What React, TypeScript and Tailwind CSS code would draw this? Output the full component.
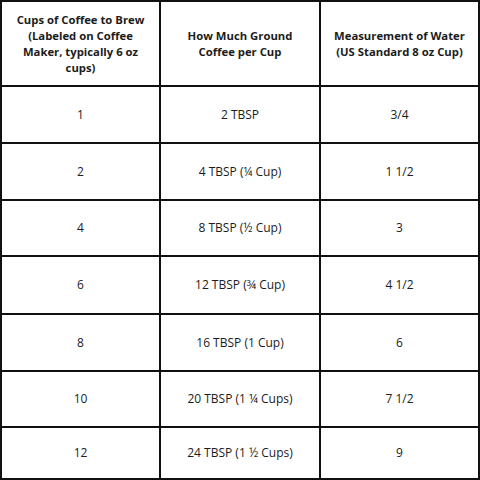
const header = [
  ['Cups of Coffee to Brew', '(Labeled on Coffee', 'Maker, typically 6 oz', 'cups)'],
  ['How Much Ground', 'Coffee per Cup'],
  ['Measurement of Water', '(US Standard 8 oz Cup)'],
];

const rows = [
  ['1', '2 TBSP', '3/4'],
  ['2', '4 TBSP (¼ Cup)', '1 1/2'],
  ['4', '8 TBSP (½ Cup)', '3'],
  ['6', '12 TBSP (¾ Cup)', '4 1/2'],
  ['8', '16 TBSP (1 Cup)', '6'],
  ['10', '20 TBSP (1 ¼ Cups)', '7 1/2'],
  ['12', '24 TBSP (1 ½ Cups)', '9'],
];

const rowHeights = ['h-[57px]', 'h-[57px]', 'h-[56px]', 'h-[58px]', 'h-[57px]', 'h-[56px]', 'h-[50px]'];

export default function App() {
  return (
    <div className="w-[480px] h-[480px] bg-white border-2 border-[#111] flex flex-col font-['Open_Sans',sans-serif] text-[#1c1c1c]">
      <div className="grid grid-cols-[159px_160px_157px] h-[85px] border-b-2 border-[#111]">
        {header.map((lines, i) => (
          <div
            key={i}
            className={`flex flex-col items-center justify-center text-center font-bold text-[11.3px] leading-[16px] whitespace-nowrap ${i < 2 ? 'border-r-2 border-[#111]' : ''}`}
          >
            {lines.map((l, li) => (
              <span key={li}>{l}</span>
            ))}
          </div>
        ))}
      </div>
      {rows.map((r, ri) => (
        <div
          key={ri}
          className={`grid grid-cols-[159px_160px_157px] ${rowHeights[ri]} ${ri < rows.length - 1 ? 'border-b-2 border-[#111]' : ''}`}
        >
          {r.map((c, ci) => (
            <div
              key={ci}
              className={`flex items-center justify-center text-[12px] ${ci < 2 ? 'border-r-2 border-[#111]' : ''}`}
            >
              {c}
            </div>
          ))}
        </div>
      ))}
    </div>
  );
}
